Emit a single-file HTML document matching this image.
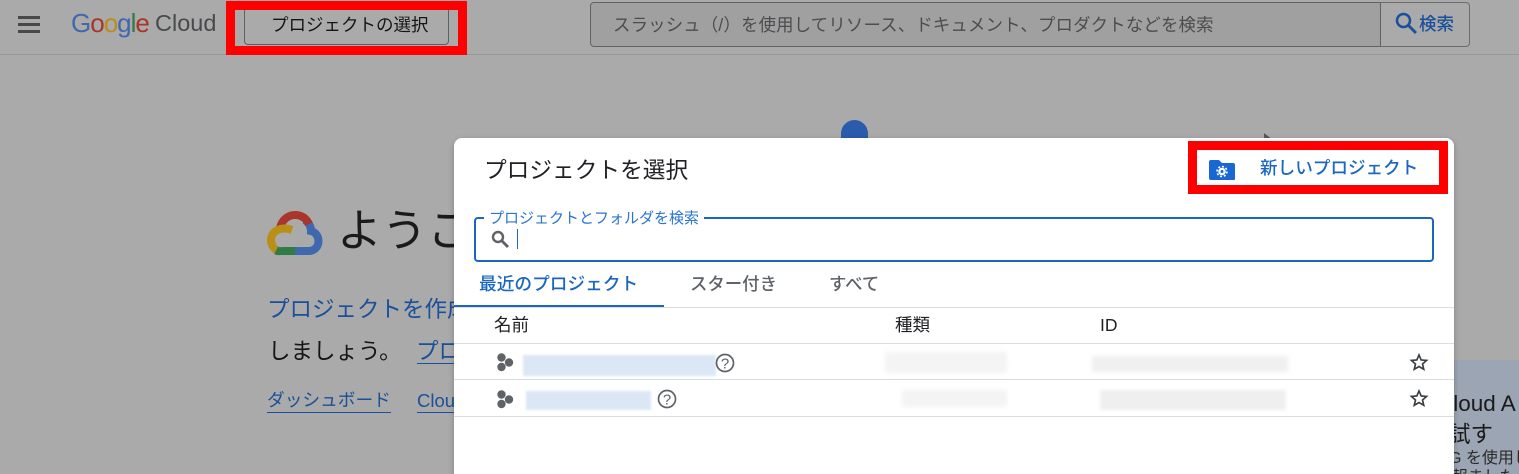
<!DOCTYPE html>
<html lang="ja"><head><meta charset="utf-8"><title>プロジェクトを選択</title>
<style>
html,body{margin:0;padding:0;background:#aaa}
#r{position:relative;width:1519px;height:474px;overflow:hidden;background:#aaa;font-family:"Liberation Sans","Noto Sans CJK JP",sans-serif;color:#151515}
#r div,#r svg{position:absolute}
.t{white-space:nowrap;line-height:1;font-family:"Liberation Sans","Noto Sans CJK JP",sans-serif}
.bl{color:#1a4f9a}
.u{position:absolute;height:2px;background:#1a4f9a}
.line{left:0;width:1000px;height:1px;background:#dadce0}
.red{border:9px solid #f00;box-sizing:border-box}
</style></head><body><div id="r">
<!-- header -->
<div style="left:0;top:54px;width:1519px;height:1px;background:#979899"></div>
<div style="left:18px;top:16px;width:22px;height:3px;background:#484848"></div>
<div style="left:18px;top:23px;width:22px;height:3px;background:#484848"></div>
<div style="left:18px;top:30px;width:22px;height:3px;background:#484848"></div>
<div class="t" style="left:71px;top:10px;font-size:26px;letter-spacing:-1px"><span style="color:#3f68ae">G</span><span style="color:#a8362d">o</span><span style="color:#b98f17">o</span><span style="color:#3f68ae">g</span><span style="color:#2f7d44">l</span><span style="color:#a8362d">e</span></div>
<div class="t" style="left:155px;top:12px;font-size:23.5px;color:#484a4c">Cloud</div>
<div style="left:244px;top:2px;width:205px;height:43px;box-sizing:border-box;border:1px solid #5f6061;border-radius:4px"></div>
<div class="t" style="left:271px;top:17px;font-size:17.5px">プロジェクトの選択</div>
<div class="red" style="left:226px;top:1px;width:241px;height:54px"></div>
<div style="left:590px;top:2px;width:791px;height:45px;box-sizing:border-box;background:#a0a0a1;border:1px solid #5f6368;border-radius:4px 0 0 4px"></div>
<div style="left:1380px;top:2px;width:90px;height:45px;box-sizing:border-box;border:1px solid #6a6c70;border-left:0;border-radius:0 4px 4px 0"></div>
<div class="t" style="left:613px;top:17px;font-size:17.4px;letter-spacing:.18px;color:#4c4d4e">スラッシュ（/）を使用してリソース、ドキュメント、プロダクトなどを検索</div>
<svg style="left:1393px;top:12px" width="25" height="24" viewBox="0 0 25 24"><circle cx="10.500" cy="8.500" r="6.500" fill="none" stroke="#1a4f9a" stroke-width="2.500"/><path d="M15 13l8 8" stroke="#1a4f9a" stroke-width="2.800" fill="none"/></svg>
<div class="t bl" style="left:1419px;top:16px;font-size:17.5px;font-weight:500">検索</div>
<!-- page behind -->
<div style="left:841px;top:120px;width:27px;height:40px;border-radius:14px;background:#2a5cab"></div>
<svg style="left:1262px;top:132px" width="14" height="8"><path d="M2 1l9 7H2z" fill="#55575a"/></svg>
<svg style="left:267px;top:211px" width="56" height="45" viewBox="0 0 56 45" fill="none" stroke-width="8">
<path d="M38 9C42 12 44 16 44 20C49 21 51.500 26 51.500 30C51.500 37 46 40 42 40H26" stroke="#3f68ae"/>
<path d="M13 17C15 8 22 4 28 4C34 4 39 7 42 13" stroke="#a8362d"/>
<path d="M25 19C14 15 4 20 4 29C4 34 7 38 11 40" stroke="#b98f17"/>
<path d="M9 39.500C11 40.500 14 40 16 40H28" stroke="#2f7d44"/>
</svg>
<div class="t" style="left:337px;top:208px;font-size:45px;color:#1a1a1a">ようこそ</div>
<div class="t bl" style="left:267px;top:299px;font-size:22.5px">プロジェクトを作成</div>
<div class="t" style="left:268px;top:341px;font-size:22.5px">しましょう。</div>
<div class="t bl" style="left:416px;top:341px;font-size:22.5px">プロジェクト</div>
<div class="u" style="left:417px;top:363px;width:40px;height:1px"></div>
<div class="t bl" style="left:267px;top:392px;font-size:17.7px">ダッシュボード</div>
<div class="u" style="left:267px;top:412px;width:124px;height:1px"></div>
<div class="t bl" style="left:417px;top:392px;font-size:18.500px">Cloud</div>
<div class="u" style="left:417px;top:412px;width:40px;height:1px"></div>
<div style="left:1440px;top:360px;width:79px;height:114px;background:#9ca5b3"></div>
<div class="t" style="left:1437px;top:393px;font-size:22.5px;color:#1a1a1a">Cloud A</div>
<div class="t" style="left:1448px;top:424px;font-size:22.5px;color:#1a1a1a">試す</div>
<div class="t" style="left:1449px;top:451px;font-size:16px;color:#2a2a2a">G を使用し</div>
<div class="t" style="left:1452px;top:470px;font-size:15.8px;color:#2a2a2a">報ました</div>
<!-- dialog -->
<div id="d" style="left:454px;top:138px;width:1000px;height:340px;background:#fff;border-radius:8px 8px 0 0;box-shadow:0 2px 6px rgba(0,0,0,.25);overflow:hidden">
<div class="t" style="left:30px;top:21px;font-size:22.7px;color:#202124">プロジェクトを選択</div>
<div style="left:20px;top:79px;width:960px;height:45px;box-sizing:border-box;border:2px solid #1a66c0;border-radius:4px"></div>
<div style="left:30px;top:72px;width:220px;height:16px;background:#fff"></div>
<div class="t" style="left:35px;top:73px;font-size:15px;color:#2a74d3">プロジェクトとフォルダを検索</div>
<svg style="left:36px;top:91px" width="20" height="20" viewBox="0 0 20 20"><circle cx="8" cy="8" r="5" fill="none" stroke="#5f6368" stroke-width="2.400"/><path d="M12 12l6 6" stroke="#5f6368" stroke-width="2.800"/></svg>
<div style="left:63px;top:91px;width:1px;height:20px;background:#1a66c0"></div>
<div class="t" style="left:25px;top:138px;font-size:17.7px;color:#1a66c0;font-weight:500">最近のプロジェクト</div>
<div class="t" style="left:236px;top:138px;font-size:17.4px;color:#5f6368;font-weight:500">スター付き</div>
<div class="t" style="left:375px;top:138px;font-size:17.4px;color:#5f6368;font-weight:500">すべて</div>
<div class="line" style="top:169px"></div>
<div style="left:0;top:167px;width:210px;height:2px;background:#1a66c0"></div>
<div class="t" style="left:40px;top:179px;font-size:17.5px;color:#202124">名前</div>
<div class="t" style="left:441px;top:179px;font-size:17.5px;color:#202124">種類</div>
<div class="t" style="left:646px;top:179px;font-size:17.5px;color:#202124">ID</div>
<div class="line" style="top:205px"></div>
<div class="line" style="top:241px"></div>
<div class="line" style="top:278px"></div>
<!-- row 1 -->
<svg style="left:42px;top:215px" width="18" height="20"><g fill="#5f6368"><circle cx="5.500" cy="4.500" r="4.200"/><circle cx="5.500" cy="14" r="4.200"/><circle cx="13" cy="9.500" r="4.200"/></g></svg>
<div style="left:69px;top:217px;width:193px;height:21px;background:#dce7f6;filter:blur(1px)"></div>
<svg style="left:261px;top:215px" width="20" height="20" viewBox="0 0 20 20"><circle cx="10" cy="10" r="8.500" fill="none" stroke="#5f6368" stroke-width="1.700"/><text x="10" y="15.500" font-size="15" text-anchor="middle" fill="#5f6368" font-family="Liberation Sans">?</text></svg>
<div style="left:431px;top:214px;width:122px;height:21px;background:#f4f4f4;filter:blur(2px)"></div>
<div style="left:638px;top:218px;width:196px;height:16px;background:#f0f0f0;filter:blur(2px)"></div>
<svg style="left:955px;top:214px" width="20" height="20" viewBox="0 0 24 24"><path d="M12 3.500l2.600 6 6.500.6-4.900 4.300 1.500 6.400L12 17.400l-5.700 3.400 1.500-6.400-4.900-4.300 6.500-.6z" fill="none" stroke="#3c4043" stroke-width="2"/></svg>
<!-- row 2 -->
<svg style="left:42px;top:252px" width="18" height="20"><g fill="#5f6368"><circle cx="5.500" cy="4.500" r="4.200"/><circle cx="5.500" cy="14" r="4.200"/><circle cx="13" cy="9.500" r="4.200"/></g></svg>
<div style="left:72px;top:253px;width:125px;height:19px;background:#dce7f6;filter:blur(1px)"></div>
<svg style="left:203px;top:251px" width="20" height="20" viewBox="0 0 20 20"><circle cx="10" cy="10" r="8.500" fill="none" stroke="#5f6368" stroke-width="1.700"/><text x="10" y="15.500" font-size="15" text-anchor="middle" fill="#5f6368" font-family="Liberation Sans">?</text></svg>
<div style="left:448px;top:252px;width:105px;height:17px;background:#f4f4f4;filter:blur(2px)"></div>
<div style="left:646px;top:252px;width:186px;height:20px;background:#efefef;filter:blur(1.500px)"></div>
<svg style="left:955px;top:250px" width="20" height="20" viewBox="0 0 24 24"><path d="M12 3.500l2.600 6 6.500.6-4.900 4.300 1.500 6.400L12 17.400l-5.700 3.400 1.500-6.400-4.900-4.300 6.500-.6z" fill="none" stroke="#3c4043" stroke-width="2"/></svg>
<!-- new project -->
<svg style="left:755px;top:22px" width="27" height="21" viewBox="0 0 27 21"><path d="M2 0h8l3 3h11a2 2 0 0 1 2 2v14a1 1 0 0 1-1 1H2a2 2 0 0 1-2-2V2a2 2 0 0 1 2-2z" fill="#1967d2"/><circle cx="13" cy="11.500" r="3.800" fill="#fff"/><circle cx="13" cy="11.500" r="5" fill="none" stroke="#fff" stroke-width="1.600" stroke-dasharray="2 1.900"/><circle cx="13" cy="11.500" r="1.500" fill="#1967d2"/></svg>
<div class="t" style="left:806px;top:22px;font-size:17.6px;color:#1a66c0;font-weight:500">新しいプロジェクト</div>
</div>
<div class="red" style="left:1188px;top:141px;width:260px;height:53px"></div>
</div></body></html>
